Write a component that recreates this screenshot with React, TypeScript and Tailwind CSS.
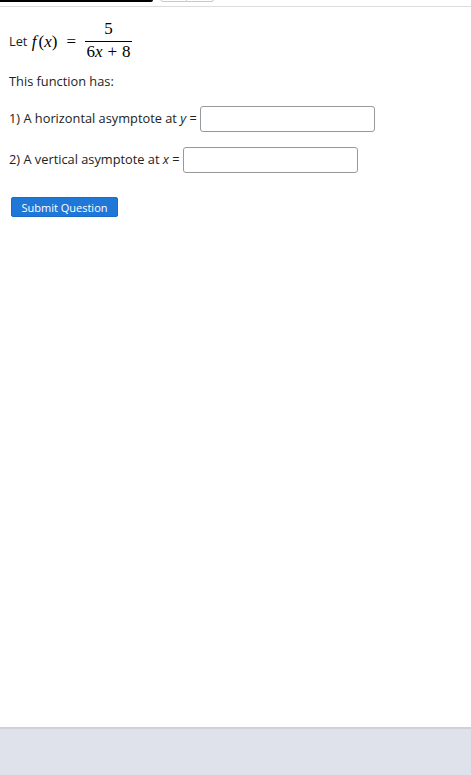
import React from 'react';

const serif = { fontFamily: '"Liberation Serif", "DejaVu Serif", serif' };

export default function App() {
  return (
    <div className="flex min-h-[775px] flex-col bg-white text-[12.8px] text-[#222]" style={{ fontFamily: '"Open Sans", sans-serif' }}>
      {/* top strip */}
      <div className="relative h-[7px] border-b border-[#dcdcdc]">
        <div className="absolute left-0 top-0 h-[2px] w-[153px] rounded-br-[3px] bg-black" />
        <div className="absolute left-[160px] top-[-3px] flex h-[5px]">
          <div className="w-[27px] rounded-bl-[3px] border border-[#c8c8c8]" />
          <div className="w-[27px] rounded-br-[3px] border border-l-0 border-[#c8c8c8]" />
        </div>
      </div>

      <div className="flex-1 pl-[9px]">
        {/* function */}
        <div className="mt-[13px] flex items-center">
          <span className="mt-[2px]">Let&nbsp;</span>
          <span className="flex items-center text-[17px] text-black" style={serif}>
            <span className="mt-[2px] flex items-center">
              <span className="ml-[1px] italic">f</span>
              <span className="ml-[2px]">(</span>
              <span className="italic">x</span>
              <span>)</span>
              <span className="mx-[9px]">=</span>
            </span>
            <span className="flex flex-col items-center">
              <span className="leading-[18px]">5</span>
              <span className="mt-[3px] h-px w-[47px] bg-black" />
              <span className="mt-[1px] leading-[18px]">
                6<span className="italic">x</span>
                <span className="mx-[5px]">+</span>8
              </span>
            </span>
          </span>
        </div>

        <p className="mt-[10px] leading-[20px]">This function has:</p>

        <div className="mt-[15px] flex items-center">
          <span>
            1) A horizontal asymptote at <span className="italic">y</span> =&nbsp;
          </span>
          <div className="h-[26px] w-[175px] rounded-[3px] border border-[#999]" />
        </div>

        <div className="mt-[15px] flex items-center">
          <span>
            2) A vertical asymptote at <span className="italic">x</span> =&nbsp;
          </span>
          <div className="h-[26px] w-[175px] rounded-[3px] border border-[#999]" />
        </div>

        <button className="ml-[2px] mt-[24px] h-[20px] w-[107px] rounded-[2px] border border-[#1a6cc8] bg-[#1f77d8] text-[11px] leading-none text-white">
          Submit Question
        </button>
      </div>

      <div className="h-[48px] border-t-2 border-[#cfd1d6] bg-[#dfe2eb]" />
    </div>
  );
}
